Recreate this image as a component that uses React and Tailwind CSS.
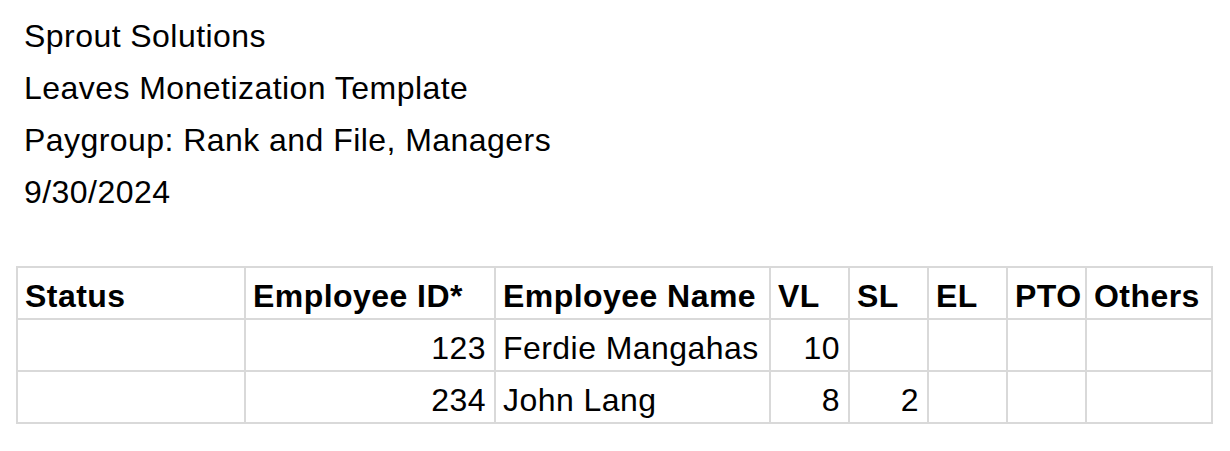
import React from "react";

const header = ["Status", "Employee ID*", "Employee Name", "VL", "SL", "EL", "PTO", "Others"];

const rows = [
  { status: "", id: "123", name: "Ferdie Mangahas", vl: "10", sl: "", el: "", pto: "", others: "" },
  { status: "", id: "234", name: "John Lang", vl: "8", sl: "2", el: "", pto: "", others: "" },
];

const Cell = ({ children, right, bold }) => (
  <div
    className={`bg-white h-[50px] flex items-center pt-[5px] px-[7px] whitespace-nowrap leading-[44px] ${
      right ? "justify-end pr-[8px]" : ""
    } ${bold ? "font-bold" : ""}`}
  >
    {children}
  </div>
);

const App = () => {
  return (
    <div
      className="min-h-screen bg-white text-black text-[32px] tracking-[0.45px]"
      style={{ fontFamily: '"Liberation Sans", Arial, sans-serif' }}
    >
      {/* Report heading */}
      <div className="pt-[10px] pl-[24px] leading-[52px]">
        <div>Sprout Solutions</div>
        <div>Leaves Monetization Template</div>
        <div>Paygroup: Rank and File, Managers</div>
        <div>9/30/2024</div>
      </div>

      {/* Leaves table */}
      <div className="pl-[16px] mt-[48px]">
        <div className="inline-grid grid-cols-[226px_248px_273px_77px_77px_77px_77px_124px] gap-[2px] p-[2px] bg-[#d9d9d9]">
          {header.map((h) => (
            <Cell key={h} bold>
              {h}
            </Cell>
          ))}
          {rows.map((r) => (
            <React.Fragment key={r.id}>
              <Cell>{r.status}</Cell>
              <Cell right>{r.id}</Cell>
              <Cell>{r.name}</Cell>
              <Cell right>{r.vl}</Cell>
              <Cell right>{r.sl}</Cell>
              <Cell right>{r.el}</Cell>
              <Cell right>{r.pto}</Cell>
              <Cell right>{r.others}</Cell>
            </React.Fragment>
          ))}
        </div>
      </div>
    </div>
  );
};

export default App;
